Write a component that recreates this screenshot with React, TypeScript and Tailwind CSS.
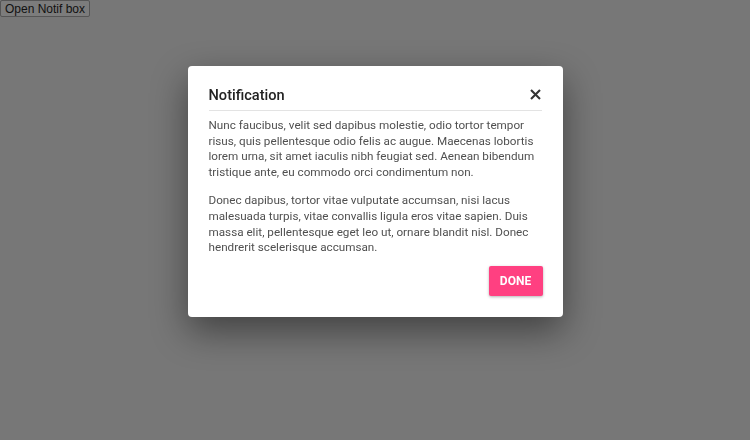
import React from "react";

export default function App() {
  return (
    <div className="relative min-h-[440px] w-full bg-[#777777] font-['Roboto',sans-serif]">
      <button className="m-0 block h-[17px] rounded-[2px] border border-[#555] bg-[#7c7c7c] px-[4px] font-['Liberation_Sans',Arial,sans-serif] text-[12px] leading-[14px] text-[#111]">
        Open Notif box
      </button>
      <div className="fixed inset-0 flex justify-center pt-[66px]">
        <div className="h-fit w-[375px] rounded-[4px] bg-white px-[21px] pb-[21px] pt-[20px] shadow-[0_14px_36px_rgba(0,0,0,0.45)]">
          <div className="box-content flex h-[18px] items-center justify-between border-b border-[#e3e3e3] pb-[6px]">
            <h2 className="text-[14.6px] font-medium leading-[18px] text-[#222]">Notification</h2>
            <svg className="mr-[1px] -mt-[2px] h-[11px] w-[11px] text-[#333]" viewBox="0 0 11 11" fill="none" stroke="currentColor" strokeWidth="2.1" strokeLinecap="butt">
              <path d="M1 1 L10 10 M10 1 L1 10" />
            </svg>
          </div>
          <div className="pt-[7px] text-[11.7px] leading-[15.6px] text-[#505050]">
            <p>
              Nunc faucibus, velit sed dapibus molestie, odio tortor tempor risus, quis pellentesque odio felis ac augue. Maecenas lobortis lorem urna, sit amet iaculis nibh feugiat sed. Aenean bibendum tristique ante, eu commodo orci condimentum non.
            </p>
            <p className="mt-[13px]">
              Donec dapibus, tortor vitae vulputate accumsan, nisi lacus malesuada turpis, vitae convallis ligula eros vitae sapien. Duis massa elit, pellentesque eget leo ut, ornare blandit nisl. Donec hendrerit scelerisque accumsan.
            </p>
          </div>
          <div className="mt-[10px] flex justify-end">
            <button className="-mr-[1px] flex h-[30px] w-[54px] items-center justify-center rounded-[2px] bg-[#ff4081] text-[12px] font-bold text-white shadow-[0_1px_3px_rgba(0,0,0,0.3)]">
              DONE
            </button>
          </div>
        </div>
      </div>
    </div>
  );
}
